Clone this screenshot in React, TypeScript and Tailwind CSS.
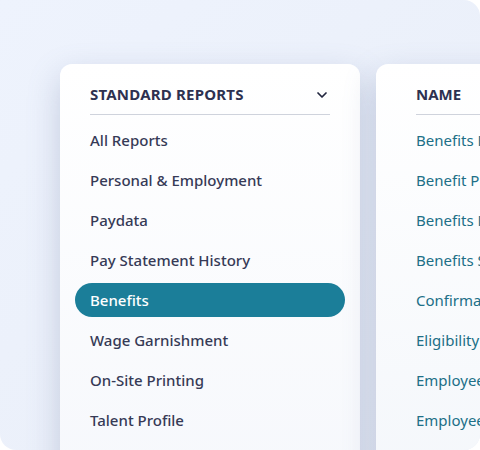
import React from 'react';
import { ChevronDown } from 'lucide-react';

const reports = [
  'All Reports',
  'Personal & Employment',
  'Paydata',
  'Pay Statement History',
  'Benefits',
  'Wage Garnishment',
  'On-Site Printing',
  'Talent Profile',
];

const names = [
  'Benefits Enrollment',
  'Benefit Plan Summary',
  'Benefits Dependents',
  'Benefits Summary',
  'Confirmation Statements',
  'Eligibility Report',
  'Employee Benefits',
  'Employee Contributions',
];

const App = () => {
  const active = 'Benefits';

  return (
    <div className="w-[480px] h-[450px] bg-white">
      <div
        className="w-full h-full overflow-hidden rounded-tr-2xl rounded-b-2xl bg-gradient-to-br from-[#eef3fd] to-[#e9eef8] pt-16 pl-[60px] flex gap-4 items-start"
        style={{ fontFamily: '"Noto Sans", "Open Sans", sans-serif' }}
      >
        {/* report categories */}
        <div className="w-[300px] shrink-0 h-[420px] rounded-xl bg-gradient-to-b from-white to-[#f6f8fc] shadow-[0_12px_32px_rgba(110,125,165,0.32)] pt-4 px-[30px]">
          <div className="h-[35px] pb-[5px] border-b border-[#cfd3dc] flex items-center justify-between">
            <span className="text-[15px] font-bold tracking-[0.2px] text-[#2e3150] uppercase">Standard Reports</span>
            <ChevronDown className="w-4 h-4 text-[#22263f]" strokeWidth={2.6} />
          </div>
          <ul className="mt-[5px]">
            {reports.map((r) => (
              <li key={r} className="h-10 flex items-center">
                {r === active ? (
                  <div className="-mx-[15px] w-[270px] h-[34px] rounded-full bg-[#1b7e99] text-white px-[15px] flex items-center text-[15px] font-medium">
                    {r}
                  </div>
                ) : (
                  <span className="text-[15px] font-medium text-[#363a56]">{r}</span>
                )}
              </li>
            ))}
          </ul>
        </div>

        {/* report names */}
        <div className="w-[340px] shrink-0 h-[420px] rounded-xl bg-gradient-to-b from-white to-[#f4f7fb] shadow-[0_12px_32px_rgba(110,125,165,0.32)] pt-4 px-10">
          <div className="h-[35px] pb-[5px] border-b border-[#cfd3dc] flex items-center">
            <span className="text-[15px] font-bold text-[#2e3150] uppercase">Name</span>
          </div>
          <ul className="mt-[5px]">
            {names.map((n) => (
              <li key={n} className="h-10 flex items-center text-[15px] text-[#206f87] whitespace-nowrap">
                {n}
              </li>
            ))}
          </ul>
        </div>
      </div>
    </div>
  );
};

export default App;
